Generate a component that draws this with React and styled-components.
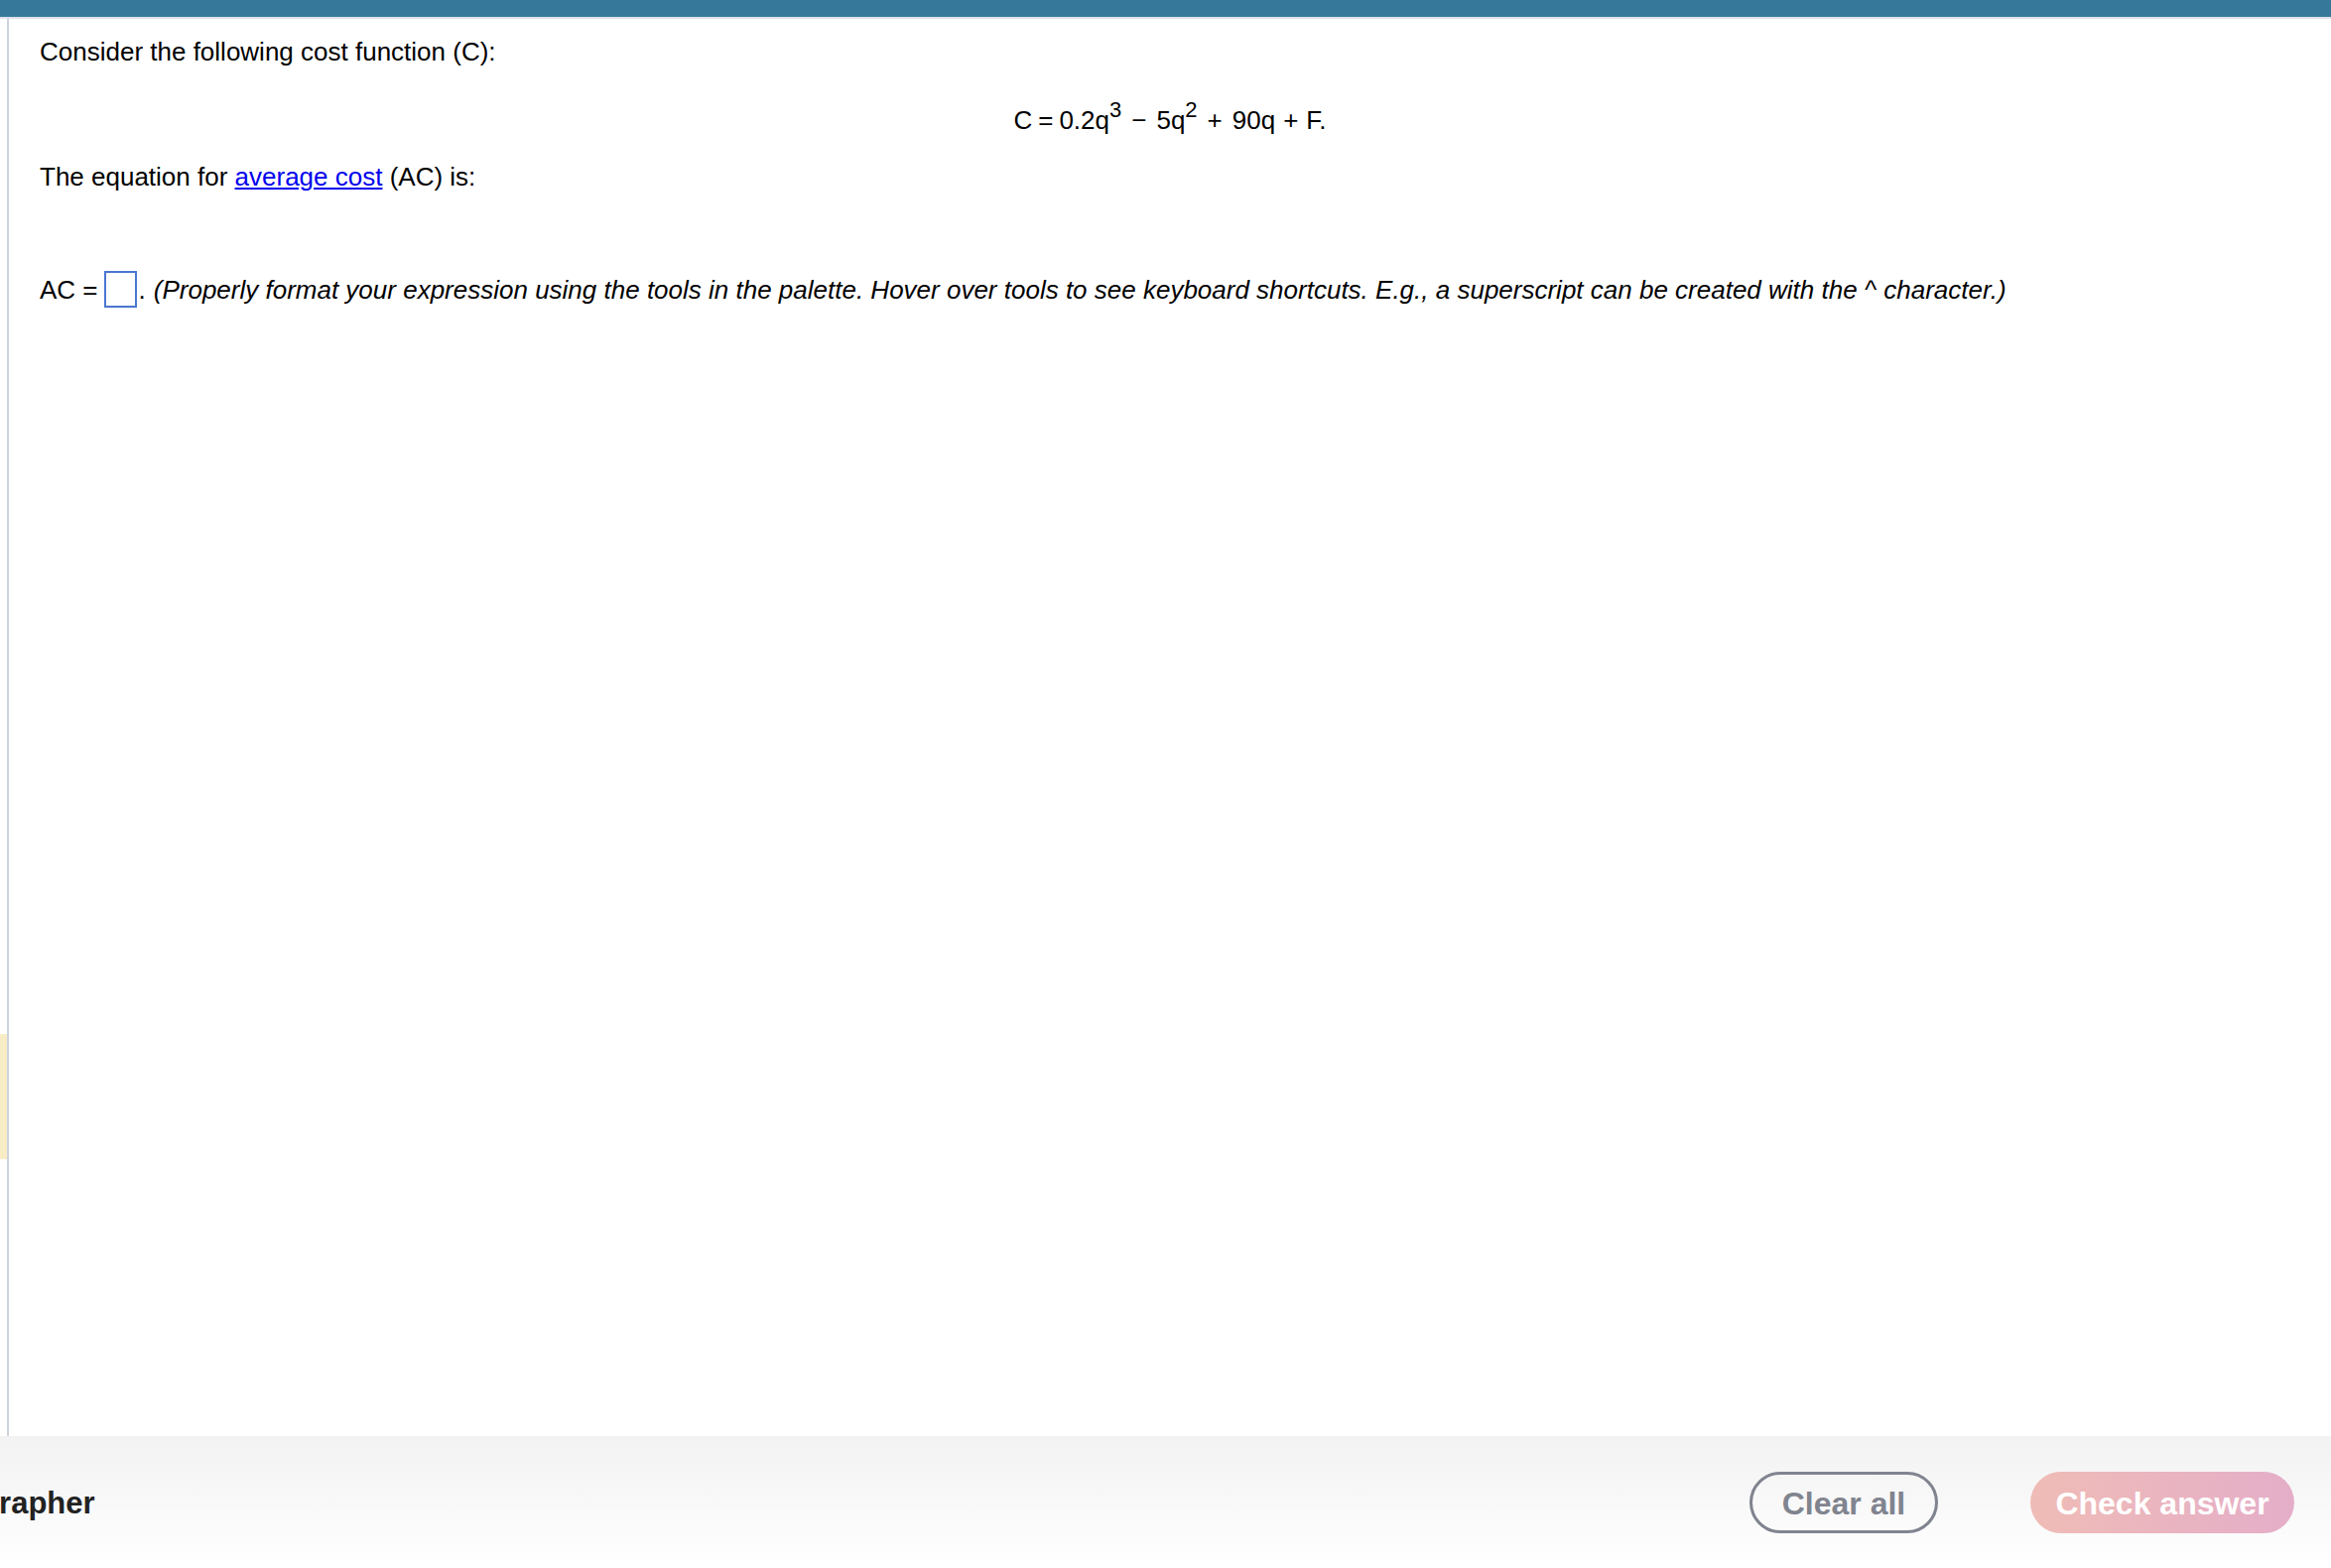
import React from "react";
import styled, { createGlobalStyle } from "styled-components";

const GlobalStyle = createGlobalStyle`
  html, body {
    margin: 0;
    padding: 0;
    background: #fff;
  }
  body {
    font-family: "Liberation Sans", Arial, sans-serif;
    color: #000;
  }
`;

const Page = styled.div`
  height: 1580px;
  display: flex;
  flex-direction: column;
  overflow: hidden;
`;

const TopBar = styled.div`
  height: 17px;
  background: #367899;
  border-bottom: 2px solid #dde2ea;
  flex-shrink: 0;
`;

const Body = styled.div`
  flex: 1;
  display: flex;
  min-height: 0;
`;

const Gutter = styled.div`
  width: 7px;
  flex-shrink: 0;
  padding-top: 1023px;
`;

const Marker = styled.div`
  height: 126px;
  background: #f8ecc4;
`;

const Content = styled.div`
  flex: 1;
  border-left: 2px solid #cdd3df;
  padding: 17px 31px 0;
  font-size: 26px;
  line-height: 32px;
`;

const Para = styled.p`
  margin: 0;
`;

const Formula = styled.div`
  text-align: center;
  margin: 37px 0 25px;
  sup {
    font-size: 22px;
    line-height: 0;
    vertical-align: 12px;
  }
`;

const Op = styled.span`
  padding: 0 ${(p) => p.$pad}px;
`;

const Link = styled.a`
  color: #0000ee;
  text-decoration: underline;
`;

const AnswerRow = styled.div`
  display: flex;
  align-items: center;
  margin-top: 79px;
`;

const AnswerBox = styled.span`
  display: inline-block;
  width: 29px;
  height: 33px;
  border: 2px solid #4a76d0;
  margin: 0 2px 0 6px;
`;

const Hint = styled.span`
  font-style: italic;
  margin-left: 8px;
`;

const Footer = styled.div`
  height: 133px;
  flex-shrink: 0;
  background: linear-gradient(#f2f2f2, #ffffff);
  display: flex;
  align-items: center;
  padding-right: 37px;
`;

const ToolName = styled.div`
  font-size: 31px;
  font-weight: 700;
  color: #222;
  margin-left: -25px;
  margin-top: 2px;
  flex: 1;
`;

const Pill = styled.button`
  height: 62px;
  border-radius: 31px;
  font-family: "Liberation Sans", Arial, sans-serif;
  font-size: 32px;
  font-weight: 700;
  padding: 4px 0 0;
  width: ${(p) => p.$w}px;
  margin-left: ${(p) => p.$ml || 0}px;
`;

const ClearButton = styled(Pill)`
  background: transparent;
  border: 3px solid #80848f;
  color: #80848f;
`;

const CheckButton = styled(Pill)`
  border: none;
  color: #fff;
  background: linear-gradient(90deg, #f0bcb6, #e4aec9);
`;

export default function App() {
  return (
    <>
      <GlobalStyle />
      <Page>
        <TopBar />
        <Body>
          <Gutter>
            <Marker />
          </Gutter>
          <Content>
            <Para>Consider the following cost function (C):</Para>
            <Formula>
              C<Op $pad={6}>=</Op>0.2q<sup>3</sup>
              <Op $pad={10}>−</Op>5q<sup>2</sup>
              <Op $pad={10}>+</Op>90q<Op $pad={8}>+</Op>F.
            </Formula>
            <Para>
              The equation for <Link href="#">average cost</Link> (AC) is:
            </Para>
            <AnswerRow>
              AC =<AnswerBox />.
              <Hint>
                (Properly format your expression using the tools in the
                palette. Hover over tools to see keyboard shortcuts. E.g., a
                superscript can be created with the ^ character.)
              </Hint>
            </AnswerRow>
          </Content>
        </Body>
        <Footer>
          <ToolName>Grapher</ToolName>
          <ClearButton $w={190}>Clear all</ClearButton>
          <CheckButton $w={266} $ml={93}>
            Check answer
          </CheckButton>
        </Footer>
      </Page>
    </>
  );
}
